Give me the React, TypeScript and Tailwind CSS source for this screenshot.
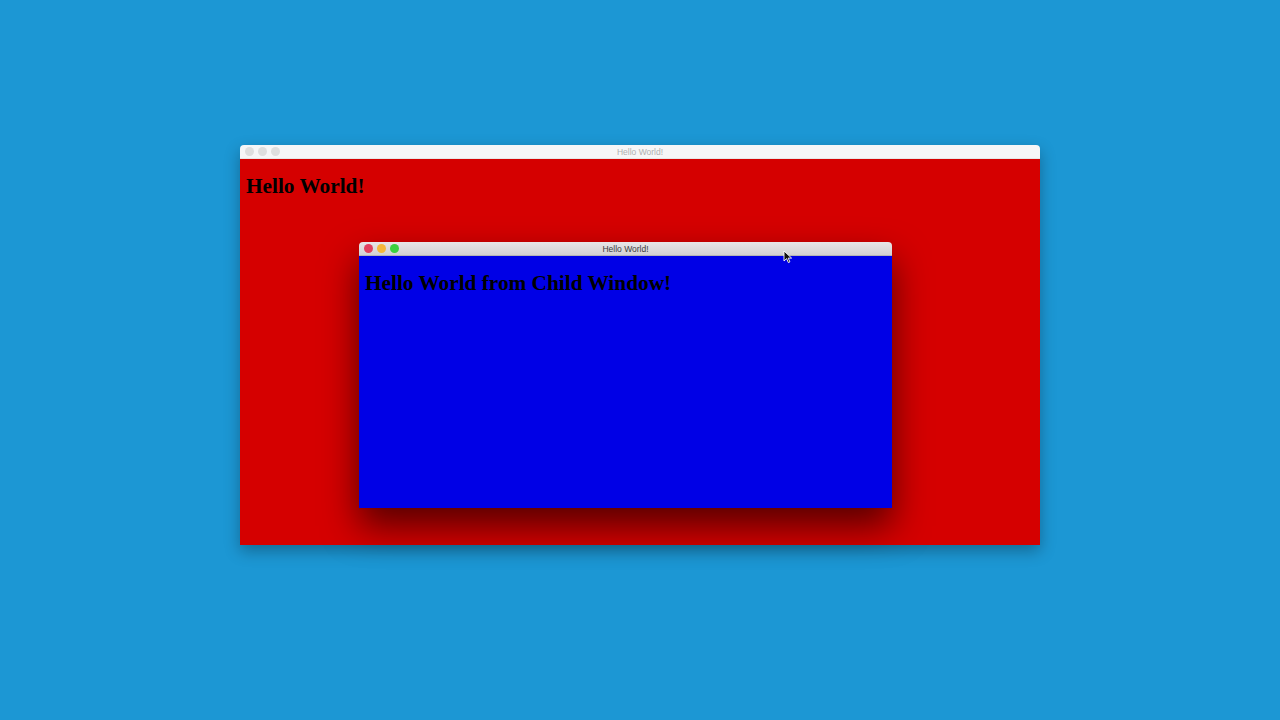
import type { ReactNode } from 'react'

const serif = { fontFamily: '"Liberation Serif", "Times New Roman", serif' }

function Lights({ active }: { active?: boolean }) {
  const fills = active
    ? ['bg-[#e2405f]', 'bg-[#f5b73c]', 'bg-[#3bd13f]']
    : ['bg-[#dedede]', 'bg-[#dedede]', 'bg-[#dedede]']
  return (
    <div className="absolute left-[5px] top-0 flex h-full items-center gap-[4.5px]">
      {fills.map((c, i) => (
        <span key={i} className={`h-[8.5px] w-[8.5px] rounded-full ${c}`} />
      ))}
    </div>
  )
}

function TitleBar({ active, children }: { active?: boolean; children: ReactNode }) {
  return (
    <div
      className={`relative flex h-[14px] shrink-0 items-center justify-center rounded-t-[4px] border-b ${
        active
          ? 'border-[#b5b5b5] bg-gradient-to-b from-[#e8e6e8] to-[#d3d1d3] text-[#3a3a3a]'
          : 'border-[#e6e6e6] bg-[#f6f6f7] text-[#b0b0b0]'
      }`}
    >
      <Lights active={active} />
      <span className="pt-[1px] text-[8.5px] leading-none" style={{ fontFamily: '"Liberation Sans", Arial, sans-serif' }}>
        {children}
      </span>
    </div>
  )
}

function Cursor() {
  return (
    <svg className="absolute left-[783px] top-[250px]" width="10" height="14" viewBox="0 0 10 14">
      <path d="M1 1 L1 11 L3.6 8.6 L5.4 12.6 L6.9 11.9 L5.2 8.1 L8.6 8.1 Z" fill="#111" stroke="#fff" strokeWidth="0.9" strokeLinejoin="round" />
    </svg>
  )
}

export default function App() {
  return (
    <div className="relative h-[720px] w-[1280px] overflow-hidden bg-[#1c97d4]">
      <div className="flex justify-center pt-[145px]">
        <div className="flex h-[400px] w-[800px] flex-col rounded-t-[4px] shadow-[0_6px_16px_rgba(0,0,0,0.3)]">
          <TitleBar>Hello World!</TitleBar>
          <div className="flex-1 bg-[#d50000] px-[6px] pt-[17px]">
            <h1 className="text-[21.3px] font-bold leading-none text-black" style={serif}>
              Hello World!
            </h1>
          </div>
        </div>
      </div>

      <div className="absolute left-[359px] top-[242px] flex h-[266px] w-[533px] flex-col rounded-t-[4px] shadow-[0_18px_36px_rgba(0,0,0,0.6)]">
        <TitleBar active>Hello World!</TitleBar>
        <div className="flex-1 bg-[#0000e6] px-[6px] pt-[17px]">
          <h1 className="text-[21.3px] font-bold leading-none text-black" style={serif}>
            Hello World from Child Window!
          </h1>
        </div>
      </div>

      <Cursor />
    </div>
  )
}
